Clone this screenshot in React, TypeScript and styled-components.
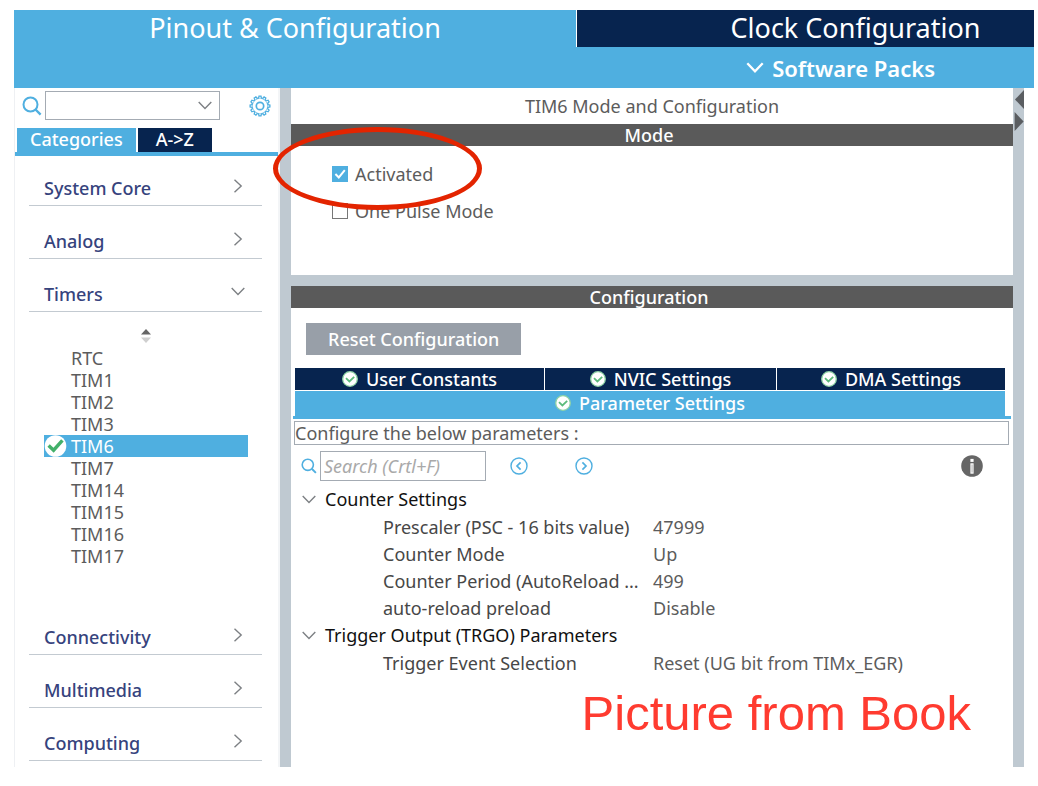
import React, { useState } from "react";
import styled, { createGlobalStyle, css } from "styled-components";

const color = {
  sky: "#4fafe0",
  navy: "#07244f",
  bar: "#5a5a5a",
  rail: "#bfc9d1",
  text: "#5c5c5c",
  label: "#474747",
  category: "#36437d",
  line: "#a4abb3",
  glyph: "#7d8084",
};

const GlobalStyle = createGlobalStyle`
  *, *::before, *::after { box-sizing: border-box; }
  body {
    margin: 0;
    background: #ffffff;
    color: ${color.text};
    font-family: "Noto Sans", "Open Sans", sans-serif;
    font-size: 18px;
    line-height: 22px;
  }
  button, input, select { font: inherit; color: inherit; margin: 0; }
  button { border: 0; padding: 0; background: none; cursor: pointer; }
`;

const Page = styled.div`
  padding: 10px 4px 19px 14px;
`;

/* ---------- top navigation ---------- */

const TopTabs = styled.nav`
  display: grid;
  grid-template-columns: 562fr 458fr;
  background: ${color.sky};
`;

const TopTab = styled.button<{ $active?: boolean }>`
  height: 37px;
  padding-bottom: 1px;
  font-size: 27px;
  line-height: 34px;
  color: #ffffff;
  white-space: nowrap;
  background: ${(p) => (p.$active ? color.sky : color.navy)};
  ${(p) =>
    !p.$active &&
    css`
      padding-left: 100px;
      border-left: 1px solid #ffffff;
    `}
`;

const SubBar = styled.div`
  display: flex;
  justify-content: flex-end;
  height: 41px;
  padding-right: 99px;
  background: ${color.sky};
`;

const PacksButton = styled.button`
  display: flex;
  align-items: center;
  gap: 8px;
  color: #ffffff;
  font-size: 22px;
  font-weight: 600;
`;

/* ---------- frame ---------- */

const Workspace = styled.div`
  display: flex;
  padding-right: 10px;
`;

const Rail = styled.div`
  flex: none;
  width: 11px;
  background: ${color.rail};
`;

const RailArrows = styled.div`
  display: flex;
  flex-direction: column;
  gap: 3px;
  padding: 2px 0 0 1px;
`;

/* ---------- sidebar ---------- */

const Sidebar = styled.aside`
  flex: none;
  width: 266px;
  border-left: 1px solid #eef0f3;
  border-right: 2px solid #f3f5f7;
`;

const Finder = styled.div`
  display: flex;
  align-items: center;
  gap: 3px;
  padding: 3px 7px 8px 7px;
`;

const ComboBox = styled.label`
  display: grid;
  align-items: center;
  width: 175px;
  margin-right: auto;
  > * {
    grid-area: 1 / 1;
  }
  > svg {
    justify-self: end;
    margin-right: 8px;
    pointer-events: none;
  }
`;

const ComboSelect = styled.select`
  appearance: none;
  width: 100%;
  height: 29px;
  border: 1px solid ${color.line};
  border-radius: 0;
  background: #ffffff;
`;

const IconButton = styled.button`
  display: flex;
`;

const SideTabs = styled.div`
  display: flex;
  gap: 2px;
  padding-left: 2px;
  border-bottom: 4px solid ${color.sky};
`;

const SideTab = styled.button<{ $active?: boolean }>`
  height: 24px;
  padding: 0 ${(p) => (p.$active ? 13 : 18)}px 2px;
  color: #ffffff;
  font-weight: 500;
  background: ${(p) => (p.$active ? color.sky : color.navy)};
`;

const CategoryList = styled.div`
  display: flex;
  flex-direction: column;
  gap: 17px;
  padding: 14px 16px 6px 14px;
`;

const CategoryButton = styled.button`
  display: flex;
  align-items: center;
  justify-content: space-between;
  height: 36px;
  padding: 0 16px 0 15px;
  border-bottom: 1px solid #c3cad1;
  color: ${color.category};
  font-weight: 500;
  text-align: left;
`;

const ChevronSlot = styled.span`
  display: flex;
  justify-content: center;
  width: 16px;
  padding-bottom: 4px;
`;

const TimerPanel = styled.div`
  display: flex;
  flex-direction: column;
  padding: 0 14px 35px 15px;
`;

const SortButton = styled.button`
  display: flex;
  align-self: center;
  height: 18px;
`;

const TimerButton = styled.button<{ $active?: boolean }>`
  display: grid;
  grid-template-columns: 27px 1fr;
  align-items: center;
  height: 22px;
  text-align: left;
  ${(p) =>
    p.$active &&
    css`
      color: #ffffff;
      background: ${color.sky};
    `}
`;

const TimerMark = styled.span`
  display: flex;
`;

/* ---------- main area ---------- */

const Main = styled.main`
  position: relative;
  flex: 1;
  min-width: 0;
  display: flex;
  flex-direction: column;
`;

const Title = styled.h1`
  margin: 0;
  padding: 7px 0 7px;
  font-size: 18px;
  font-weight: 400;
  text-align: center;
`;

const BarTitle = styled.h2`
  margin: 0;
  height: 22px;
  color: #ffffff;
  background: ${color.bar};
  font-size: 18px;
  font-weight: 500;
  text-align: center;
  padding-right: 6px;
`;

const ModeBody = styled.div`
  display: flex;
  flex-direction: column;
  gap: 15px;
  padding: 17px 0 53px 41px;
`;

const CheckLabel = styled.label`
  display: flex;
  align-items: center;
  gap: 7px;
`;

const CheckFrame = styled.span`
  display: grid;
  > * {
    grid-area: 1 / 1;
  }
  > svg {
    pointer-events: none;
  }
`;

const CheckInput = styled.input`
  appearance: none;
  width: 16px;
  height: 16px;
  border: 1px solid #777777;
  background: #ffffff;
  &:checked {
    border-color: ${color.sky};
    background: ${color.sky};
  }
`;

const Divider = styled.div`
  height: 11px;
  background: ${color.rail};
`;

const ConfigBody = styled.div`
  flex: 1;
  padding: 15px 2px 0;
`;

const ResetButton = styled.button`
  display: block;
  height: 32px;
  margin: 0 0 13px 13px;
  padding: 0 22px;
  color: #ffffff;
  background: #989fa8;
  font-weight: 500;
`;

const TabGroup = styled.div`
  display: grid;
  grid-template-columns: 249fr 231fr 228fr;
  gap: 1px;
  padding: 0 6px 0 2px;
`;

const ConfigTab = styled.button<{ $active?: boolean }>`
  display: flex;
  align-items: center;
  justify-content: center;
  gap: 8px;
  height: 22px;
  color: #ffffff;
  font-weight: 500;
  white-space: nowrap;
  background: ${color.navy};
  ${(p) =>
    p.$active &&
    css`
      grid-column: 1 / -1;
      height: 25px;
      padding-bottom: 2px;
      background: ${color.sky};
    `}
`;

const TabLine = styled.div`
  height: 3px;
  background: ${color.sky};
`;

const Hint = styled.p`
  height: 24px;
  margin: 2px 2px 6px 1px;
  border: 1px solid ${color.line};
`;

const ParamFinder = styled.div`
  display: flex;
  align-items: center;
  padding: 0 28px 0 8px;
`;

const ParamSearch = styled.input`
  width: 166px;
  height: 30px;
  margin: 0 24px 0 3px;
  padding: 0 3px;
  border: 1px solid ${color.line};
  font-style: italic;
  &::placeholder {
    color: #a9a9a9;
    opacity: 1;
  }
`;

const StepButtons = styled.div`
  display: flex;
  gap: 47px;
  margin-right: auto;
`;

const ParamTable = styled.table`
  width: 100%;
  margin-top: 4px;
  table-layout: fixed;
  border-collapse: collapse;
  text-align: left;
`;

const LabelCol = styled.col`
  width: 360px;
`;

const GroupCell = styled.th`
  height: 28px;
  padding: 0 0 0 9px;
  font-weight: 400;
  color: #111111;
`;

const GroupButton = styled.button`
  display: flex;
  align-items: center;
  gap: 9px;
`;

const NameCell = styled.th`
  height: 27px;
  padding: 0 0 0 90px;
  font-weight: 400;
  color: ${color.label};
  white-space: nowrap;
`;

const ValueCell = styled.td`
  height: 27px;
  padding: 0;
  white-space: nowrap;
`;

/* ---------- annotations drawn over the window ---------- */

const RedRing = styled.div`
  position: absolute;
  left: -18px;
  top: 39px;
  width: 209px;
  height: 83px;
  border: 5px solid #e32400;
  border-radius: 50%;
  pointer-events: none;
`;

const Caption = styled.p`
  position: absolute;
  right: 42px;
  bottom: 26px;
  margin: 0;
  color: #ff3b30;
  font-family: "Liberation Sans", Arial, sans-serif;
  font-size: 49px;
  line-height: 56px;
  white-space: nowrap;
`;

/* ---------- icons ---------- */

const Magnifier = ({ size }: { size: number }) => (
  <svg width={size} height={size} viewBox="0 0 20 20" fill="none" stroke={color.sky} strokeWidth="2" aria-hidden="true">
    <circle cx="8.5" cy="8.5" r="7" />
    <path d="M13.5 13.5 L18.6 18.6" strokeWidth="2.4" />
  </svg>
);

const ChevronDown = ({ stroke = color.glyph, width = 14, weight = 1.4 }) => (
  <svg width={width} height={(width * 9) / 14 | 0} viewBox="0 0 14 9" fill="none" stroke={stroke} strokeWidth={weight} aria-hidden="true">
    <path d="M0.7 1 L7 7.6 L13.3 1" />
  </svg>
);

const ChevronRight = () => (
  <svg width="10" height="14" viewBox="0 0 10 14" fill="none" stroke={color.glyph} strokeWidth="1.4" aria-hidden="true">
    <path d="M1.5 0.7 L8.2 7 L1.5 13.3" />
  </svg>
);

const teeth = Array.from({ length: 12 }, (_, i) => i * 30);

const Gear = () => (
  <svg width="22" height="22" viewBox="0 0 22 22" fill="none" stroke={color.sky} strokeWidth="1.5" aria-hidden="true">
    <circle cx="11" cy="11" r="8" />
    <circle cx="11" cy="11" r="3.7" strokeWidth="1.7" />
    {teeth.map((angle) => (
      <path
        key={angle}
        d="M9.6 3.4 L10 1.1 H12 L12.4 3.4"
        fill="#ffffff"
        strokeWidth="1.3"
        transform={`rotate(${angle} 11 11)`}
      />
    ))}
  </svg>
);

const SortArrows = () => (
  <svg width="10" height="14" viewBox="0 0 10 14" aria-hidden="true">
    <path d="M0 5.6 L5 0 L10 5.6 Z" fill="#666666" />
    <path d="M0 8.4 L5 14 L10 8.4 Z" fill="#cfcfcf" />
  </svg>
);

const BigCheck = () => (
  <svg width="23" height="22" viewBox="0 0 23 22" aria-hidden="true">
    <circle cx="11.5" cy="11" r="10.8" fill="#ffffff" />
    <path d="M4.6 10.4 L9.6 15.2 L18.4 5.4" fill="none" stroke="#43b06a" strokeWidth="3.4" />
  </svg>
);

const TabCheck = () => (
  <svg width="16" height="16" viewBox="0 0 16 16" aria-hidden="true">
    <circle cx="8" cy="8" r="7.3" fill="#ffffff" stroke="#8fd3a5" strokeWidth="1.3" />
    <path d="M4 7.2 L7.4 10.4 L12.2 5.8" fill="none" stroke="#5cbb7c" strokeWidth="1.8" />
  </svg>
);

const BoxCheck = () => (
  <svg width="16" height="16" viewBox="0 0 16 16" fill="none" stroke="#ffffff" strokeWidth="2" aria-hidden="true">
    <path d="M3.4 8 L6.8 11.4 L12.8 4.2" />
  </svg>
);

const StepIcon = ({ back }: { back?: boolean }) => (
  <svg width="18" height="18" viewBox="0 0 18 18" fill="none" stroke={color.sky} strokeWidth="1.4" aria-hidden="true">
    <circle cx="9" cy="9" r="8" />
    <path d={back ? "M10.6 5.4 L7 9 L10.6 12.6" : "M7.4 5.4 L11 9 L7.4 12.6"} strokeWidth="1.7" />
  </svg>
);

const InfoIcon = () => (
  <svg width="22" height="22" viewBox="0 0 22 22" aria-hidden="true">
    <circle cx="11" cy="11" r="10.8" fill="#666666" />
    <rect x="9.4" y="3.9" width="3.2" height="3" fill="#ffffff" />
    <rect x="9.4" y="8.3" width="3.2" height="10.4" fill="#ffffff" />
    <rect x="10.6" y="9.5" width="0.9" height="8" fill="#a5a5a5" />
  </svg>
);

const RailArrow = ({ left }: { left?: boolean }) => (
  <svg width="10" height="19" viewBox="0 0 10 19" aria-hidden="true">
    <path d={left ? "M10 0 V19 L1 9.5 Z" : "M0.6 0 V19 L9.6 9.5 Z"} fill="#5a5d61" />
  </svg>
);

/* ---------- data ---------- */

const timers = ["RTC", "TIM1", "TIM2", "TIM3", "TIM6", "TIM7", "TIM14", "TIM15", "TIM16", "TIM17"];

const groups = [
  {
    name: "Counter Settings",
    rows: [
      ["Prescaler (PSC - 16 bits value)", "47999"],
      ["Counter Mode", "Up"],
      ["Counter Period (AutoReload ...", "499"],
      ["auto-reload preload", "Disable"],
    ],
  },
  {
    name: "Trigger Output (TRGO) Parameters",
    rows: [["Trigger Event Selection", "Reset (UG bit from TIMx_EGR)"]],
  },
];

const Category = ({ name, open }: { name: string; open?: boolean }) => (
  <CategoryButton type="button" aria-expanded={!!open}>
    {name}
    <ChevronSlot>{open ? <ChevronDown /> : <ChevronRight />}</ChevronSlot>
  </CategoryButton>
);

const CheckOption = ({ label, initial }: { label: string; initial: boolean }) => {
  const [checked, setChecked] = useState(initial);
  return (
    <CheckLabel>
      <CheckFrame>
        <CheckInput type="checkbox" checked={checked} onChange={(e) => setChecked(e.target.checked)} />
        {checked && <BoxCheck />}
      </CheckFrame>
      {label}
    </CheckLabel>
  );
};

export default function App() {
  const [timer, setTimer] = useState("TIM6");

  return (
    <Page>
      <GlobalStyle />
      <TopTabs>
        <TopTab type="button" $active>Pinout &amp; Configuration</TopTab>
        <TopTab type="button">Clock Configuration</TopTab>
      </TopTabs>
      <SubBar>
        <PacksButton type="button">
          <ChevronDown stroke="#ffffff" width={18} weight={1.9} />
          Software Packs
        </PacksButton>
      </SubBar>

      <Workspace>
        <Sidebar>
          <Finder>
            <Magnifier size={20} />
            <ComboBox>
              <ComboSelect aria-label="Find peripheral" />
              <ChevronDown />
            </ComboBox>
            <IconButton type="button" aria-label="Settings">
              <Gear />
            </IconButton>
          </Finder>
          <SideTabs>
            <SideTab type="button" $active>Categories</SideTab>
            <SideTab type="button">A-&gt;Z</SideTab>
          </SideTabs>
          <CategoryList>
            <Category name="System Core" />
            <Category name="Analog" />
            <Category name="Timers" open />
            <TimerPanel>
              <SortButton type="button" aria-label="Sort">
                <SortArrows />
              </SortButton>
              {timers.map((name) => (
                <TimerButton key={name} type="button" $active={name === timer} onClick={() => setTimer(name)}>
                  <TimerMark>{name === timer && <BigCheck />}</TimerMark>
                  {name}
                </TimerButton>
              ))}
            </TimerPanel>
            <Category name="Connectivity" />
            <Category name="Multimedia" />
            <Category name="Computing" />
          </CategoryList>
        </Sidebar>

        <Rail />

        <Main>
          <Title>TIM6 Mode and Configuration</Title>
          <BarTitle>Mode</BarTitle>
          <ModeBody>
            <CheckOption label="Activated" initial />
            <CheckOption label="One Pulse Mode" initial={false} />
          </ModeBody>
          <Divider />
          <BarTitle>Configuration</BarTitle>
          <ConfigBody>
            <ResetButton type="button">Reset Configuration</ResetButton>
            <TabGroup>
              <ConfigTab type="button"><TabCheck />User Constants</ConfigTab>
              <ConfigTab type="button"><TabCheck />NVIC Settings</ConfigTab>
              <ConfigTab type="button"><TabCheck />DMA Settings</ConfigTab>
              <ConfigTab type="button" $active><TabCheck />Parameter Settings</ConfigTab>
            </TabGroup>
            <TabLine />
            <Hint>Configure the below parameters :</Hint>
            <ParamFinder>
              <Magnifier size={16} />
              <ParamSearch type="text" aria-label="Search parameters" placeholder="Search (Crtl+F)" />
              <StepButtons>
                <IconButton type="button" aria-label="Previous"><StepIcon back /></IconButton>
                <IconButton type="button" aria-label="Next"><StepIcon /></IconButton>
              </StepButtons>
              <IconButton type="button" aria-label="Information"><InfoIcon /></IconButton>
            </ParamFinder>
            <ParamTable>
              <colgroup>
                <LabelCol />
                <col />
              </colgroup>
              {groups.map((group) => (
                <tbody key={group.name}>
                  <tr>
                    <GroupCell colSpan={2}>
                      <GroupButton type="button"><ChevronDown />{group.name}</GroupButton>
                    </GroupCell>
                  </tr>
                  {group.rows.map(([name, value]) => (
                    <tr key={name}>
                      <NameCell scope="row">{name}</NameCell>
                      <ValueCell>{value}</ValueCell>
                    </tr>
                  ))}
                </tbody>
              ))}
            </ParamTable>
          </ConfigBody>
          <RedRing />
          <Caption>Picture from Book</Caption>
        </Main>

        <Rail>
          <RailArrows>
            <RailArrow left />
            <RailArrow />
          </RailArrows>
        </Rail>
      </Workspace>
    </Page>
  );
}
